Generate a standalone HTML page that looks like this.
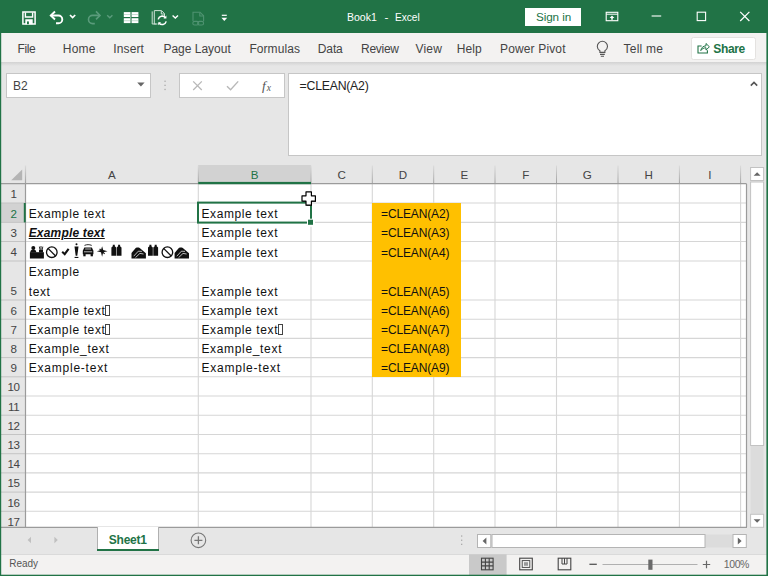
<!DOCTYPE html>
<html lang="en">
<head>
<meta charset="utf-8">
<title>Book1 - Excel</title>
<style>
html,body{margin:0;padding:0}
body{width:768px;height:576px;overflow:hidden;position:relative;background:#e6e6e6;font-family:"Liberation Sans",sans-serif;color:#262626}
.a{position:absolute}
.t{position:absolute;white-space:nowrap;line-height:1}
#title{left:0;top:0;width:768px;height:33px;background:#217346}
#ribbon{left:0;top:33px;width:768px;height:29px;background:#f3f2f1}
#rshadow{left:0;top:62px;width:768px;height:4px;background:linear-gradient(#d2d2d2,#e6e6e6)}
.tab{font-size:12px;color:#444;top:42.6px}
.tt{color:#fff;font-size:11.7px;top:11px}
#namebox{left:6px;top:73px;width:143px;height:23px;background:#fff;border:1px solid #c6c6c6}
#fxbtns{left:179px;top:73px;width:104px;height:23px;background:#fff;border:1px solid #c6c6c6}
#fbox{left:288px;top:73px;width:472px;height:81px;background:#fff;border:1px solid #c6c6c6}
#sheet{left:26px;top:184px;width:720px;height:343px;background:#fff}
.ch{position:absolute;top:165px;height:18px;line-height:20px;text-align:center;font-size:11.6px;color:#444}
.ch.sel{background:#d2d2d2;color:#217346}
.rh{position:absolute;left:1px;width:24px;text-align:center;font-size:11.6px;color:#444;letter-spacing:-0.4px}
.rh span{position:absolute;left:0.6px;width:24px;bottom:3.1px;line-height:1}
.rh.sel{background:#d2d2d2;color:#217346}
.c{position:absolute;white-space:nowrap;font-size:12px;line-height:1;color:#111}
.nb{display:inline-block;width:2.6px;height:8.6px;border:1px solid #444;margin-left:-0.3px;vertical-align:-1px}
.f{position:absolute;white-space:nowrap;font-size:12px;line-height:1;color:#111;left:381px;letter-spacing:-0.13px}
#tabs{left:1px;top:528px;width:766px;height:26px;background:#e6e6e6}
#status{left:1px;top:554px;width:766px;height:22px;background:#f3f2f1;border-top:1px solid #dadada;box-sizing:border-box}
#bl{left:0;top:33px;width:1px;height:543px;background:#217346}
#br{left:767px;top:33px;width:1px;height:543px;background:#217346}
#bb{left:0;top:575px;width:768px;height:1px;background:#217346}
</style>
</head>
<body>
<!-- title bar -->
<div class="a" id="title"></div>
<div class="t tt" style="left:347px;transform:scaleX(0.9);transform-origin:0 0">Book1</div>
<div class="t tt" style="left:384.5px">-</div>
<div class="t tt" style="left:394.7px;transform:scaleX(0.865);transform-origin:0 0">Excel</div>
<svg class="a" style="left:0;top:0" width="768" height="33" viewBox="0 0 768 33" fill="none" stroke="#fff" stroke-width="1.3">
<!-- save -->
<path d="M22.900 12h12.200v12h-12.200z" stroke-width="1.500"/>
<path d="M25.400 12.600v4.400h7.200v-4.400" stroke-width="1.400"/>
<path d="M25.300 19.300h7.400v4.900h-7.400z" fill="#fff" stroke="none"/>
<rect x="27" y="21.400" width="1.900" height="2.800" fill="#217346" stroke="none"/>
<!-- undo -->
<path d="M50.800 15.500h7.600a3.900 3.900 0 0 1 0 7.800h-2.400" stroke-width="1.900"/>
<path d="M55 11.500l-4.200 4 4.200 4" stroke-width="1.900"/>
<path d="M70 15l2.600 2.600 2.600-2.600" stroke-width="1.700"/>
<!-- redo (dim) -->
<g stroke="#5a9b7b">
<path d="M100 15.4h-7.4a4.1 4.1 0 0 0 0 8.2h2.2" stroke-width="1.6"/>
<path d="M96 11.4l4 4-4 4" stroke-width="1.6"/>
<path d="M107.2 15.2l2.6 2.6 2.6-2.6" stroke-width="1.4"/>
</g>
<!-- table icon -->
<g stroke="none" fill="#fff">
<rect x="123.8" y="12.1" width="6.2" height="4.9"/>
<rect x="131.6" y="12.1" width="6.8" height="4.9"/>
<rect x="123.8" y="18.2" width="6.2" height="4.9"/>
<rect x="131.6" y="18.2" width="6.8" height="4.9"/>
<rect x="130.4" y="12.1" width="0.7" height="11" fill="#cfe3d7"/>
</g>
<path d="M123.8 14.5h14.6M123.8 20.7h14.6" stroke="#8fbba3" stroke-width="0.5"/>
<!-- doc refresh -->
<g stroke="#cfe3d7" stroke-width="1">
<path d="M152.2 11.4v12.6h3.5"/>
<path d="M154.3 10.6h7.2l3 3v3.2M154.3 10.6v13.4h3.2"/>
<path d="M161.3 10.8v3.2h3"/>
</g>
<g stroke="#fff" stroke-width="1.5">
<path d="M158.2 19.3a4.1 4.1 0 0 1 7.2-1.6"/>
<path d="M166.2 21.4a4.1 4.1 0 0 1-7.2 1.6"/>
</g>
<path d="M166.4 15.6v2.9h-2.9zM158.2 25.2v-2.9h2.9z" fill="#fff" stroke="none"/>
<path d="M172.6 15.4l2.7 2.7 2.7-2.7" stroke-width="1.4"/>
<!-- dim doc link -->
<g stroke="#4f9371" stroke-width="1.1">
<path d="M193 21v-8.8h7l3.6 3.6v5.4"/>
<path d="M199.8 12.4v3.6h3.6"/>
<rect x="192.8" y="21.4" width="6" height="3.6" rx="1.8"/>
<rect x="197.6" y="21.4" width="6" height="3.6" rx="1.8"/>
</g>
<!-- qat customize -->
<path d="M221.8 15.3h5" stroke-width="1.2"/>
<path d="M221.4 17.8h5.8l-2.9 3.2z" fill="#fff" stroke="none"/>
<!-- ribbon display options -->
<rect x="606.2" y="12.3" width="11.6" height="8.4" stroke-width="1.1"/>
<path d="M606.2 14.2h11.6" stroke-width="1"/>
<path d="M612 15.6l-2.4 2.4h1.6v1.8h1.6v-1.8h1.6z" fill="#fff" stroke="none"/>
<!-- min / max / close -->
<path d="M651.6 16h9.6" stroke-width="1.1"/>
<rect x="697.2" y="12.2" width="8.4" height="8.4" stroke-width="1.1"/>
<path d="M740.2 11.8l9.2 9.2M749.4 11.8l-9.2 9.2" stroke-width="1.2"/>
</svg>
<div class="a" style="left:525px;top:8px;width:56px;height:18px;background:#fff"></div>
<div class="t" style="left:536px;top:11.4px;font-size:11.7px;color:#217346;letter-spacing:-0.1px">Sign in</div>

<!-- ribbon tabs -->
<div class="a" id="ribbon"></div>
<div class="a" id="rshadow"></div>
<div class="t tab" style="left:17.6px;letter-spacing:-0.45px">File</div>
<div class="t tab" style="left:62.7px;letter-spacing:0.28px">Home</div>
<div class="t tab" style="left:113.3px;letter-spacing:0.12px">Insert</div>
<div class="t tab" style="left:163.4px;letter-spacing:0.0px">Page Layout</div>
<div class="t tab" style="left:249.4px;letter-spacing:0.07px">Formulas</div>
<div class="t tab" style="left:317.8px;letter-spacing:-0.13px">Data</div>
<div class="t tab" style="left:361px;letter-spacing:-0.28px">Review</div>
<div class="t tab" style="left:415.4px;letter-spacing:0.23px">View</div>
<div class="t tab" style="left:456.8px;letter-spacing:0.1px">Help</div>
<div class="t tab" style="left:500px;letter-spacing:0.15px">Power Pivot</div>
<div class="t tab" style="left:623.5px;letter-spacing:0.23px">Tell me</div>
<div class="a" style="left:691px;top:37.4px;width:62.6px;height:20.4px;background:#fff;border-radius:2.5px;border:0.6px solid #e4e2e0"></div>
<div class="t" style="left:713.3px;top:42.6px;font-size:12px;color:#217346;font-weight:bold;letter-spacing:-0.35px">Share</div>

<svg class="a" style="left:0;top:33px" width="768" height="30" viewBox="0 33 768 30" fill="none">
<!-- lightbulb -->
<path d="M599.9 52.4v-1.6c-1.6-1.2-2.6-2.6-2.6-4.4a5.1 5.1 0 0 1 10.2 0c0 1.800-1 3.200-2.600 4.400v1.600z" stroke="#555" stroke-width="1.1"/>
<path d="M600 54.400h4.800M600.800 56.300h3.200" stroke="#555" stroke-width="1.1"/>
<!-- share icon -->
<path d="M701.600 46h-3.600v7h9.400v-2.800" stroke="#217346" stroke-width="1.100"/>
<path d="M700.800 50.600c.4-2.900 2.300-4.600 5.200-4.800v-2.300l3.400 3.300-3.400 3.300v-2.300c-2.300 0-4 .9-5.200 2.800z" stroke="#217346" stroke-width="1" stroke-linejoin="round"/>
</svg>
<!-- formula bar -->
<div class="a" id="namebox"></div>
<div class="t" style="left:13px;top:80px;font-size:12px;color:#444">B2</div>
<div class="a" id="fxbtns"></div>
<div class="a" id="fbox"></div>
<div class="t" style="left:299.6px;top:80px;font-size:12.3px;color:#222;letter-spacing:-0.25px">=CLEAN(A2)</div>

<svg class="a" style="left:0;top:66px" width="768" height="99" viewBox="0 66 768 99" fill="none">
<path d="M137.200 82.400h7.400l-3.700 4.100z" fill="#666"/>
<rect x="164.400" y="80.600" width="1.300" height="1.300" fill="#aaa"/><rect x="164.400" y="84.700" width="1.300" height="1.300" fill="#aaa"/><rect x="164.400" y="88.800" width="1.300" height="1.300" fill="#aaa"/>
<path d="M193.200 81.400l8.600 8.600M201.800 81.400l-8.600 8.600" stroke="#b8b8b8" stroke-width="1.300"/>
<path d="M227 86.200l3.600 3.600 7.600-8.400" stroke="#b8b8b8" stroke-width="1.400"/>
<path d="M750.800 85.600l3.200-3.200 3.200 3.200" stroke="#555" stroke-width="1.600"/>
</svg>
<div class="t" style="left:262px;top:79px;font-family:'Liberation Serif',serif;font-style:italic;font-size:13.5px;color:#555">f</div>
<div class="t" style="left:266.800px;top:83.500px;font-family:'Liberation Serif',serif;font-style:italic;font-size:9.500px;color:#555">x</div>
<!-- sheet -->
<div class="a" id="sheet"></div>
<div class="ch" style="left:25.5px;width:172.8px">A</div>
<div class="ch sel" style="left:198.3px;width:112.69999999999999px">B</div>
<div class="ch" style="left:311px;width:61.30000000000001px">C</div>
<div class="ch" style="left:372.3px;width:61.39999999999998px">D</div>
<div class="ch" style="left:433.7px;width:61.30000000000001px">E</div>
<div class="ch" style="left:495px;width:61.5px">F</div>
<div class="ch" style="left:556.5px;width:61.5px">G</div>
<div class="ch" style="left:618px;width:61.39999999999998px">H</div>
<div class="ch" style="left:679.4px;width:61.200000000000045px">I</div>
<div class="rh" style="top:183.7px;height:19.30000000000001px"><span>1</span></div>
<div class="rh sel" style="top:203px;height:19.400000000000006px"><span>2</span></div>
<div class="rh" style="top:222.4px;height:19.099999999999994px"><span>3</span></div>
<div class="rh" style="top:241.5px;height:19.5px"><span>4</span></div>
<div class="rh" style="top:261px;height:39px"><span>5</span></div>
<div class="rh" style="top:300px;height:19.19999999999999px"><span>6</span></div>
<div class="rh" style="top:319.2px;height:19.19999999999999px"><span>7</span></div>
<div class="rh" style="top:338.4px;height:19.200000000000045px"><span>8</span></div>
<div class="rh" style="top:357.6px;height:19.19999999999999px"><span>9</span></div>
<div class="rh" style="top:376.8px;height:19.19999999999999px"><span>10</span></div>
<div class="rh" style="top:396px;height:19.19999999999999px"><span>11</span></div>
<div class="rh" style="top:415.2px;height:19.30000000000001px"><span>12</span></div>
<div class="rh" style="top:434.5px;height:19.19999999999999px"><span>13</span></div>
<div class="rh" style="top:453.7px;height:19.19999999999999px"><span>14</span></div>
<div class="rh" style="top:472.9px;height:19.200000000000045px"><span>15</span></div>
<div class="rh" style="top:492.1px;height:19.19999999999999px"><span>16</span></div>
<div class="rh" style="top:511.3px;height:19.19999999999999px"><span>17</span></div>
<svg class="a" style="left:0;top:0" width="768" height="576" viewBox="0 0 768 576">
<defs><linearGradient id="hs" gradientUnits="userSpaceOnUse" x1="0" y1="165" x2="0" y2="183"><stop offset="0" stop-color="#dcdcdc"/><stop offset="1" stop-color="#a2a2a2"/></linearGradient></defs>
<rect x="197.8" y="165.500" width="1" height="18" fill="url(#hs)"/>
<rect x="310.5" y="165.500" width="1" height="18" fill="url(#hs)"/>
<rect x="371.8" y="165.500" width="1" height="18" fill="url(#hs)"/>
<rect x="433.2" y="165.500" width="1" height="18" fill="url(#hs)"/>
<rect x="494.5" y="165.500" width="1" height="18" fill="url(#hs)"/>
<rect x="556.0" y="165.500" width="1" height="18" fill="url(#hs)"/>
<rect x="617.5" y="165.500" width="1" height="18" fill="url(#hs)"/>
<rect x="678.9" y="165.500" width="1" height="18" fill="url(#hs)"/>
<rect x="740.1" y="165.500" width="1" height="18" fill="url(#hs)"/>
<line x1="198.3" y1="184" x2="198.3" y2="527.3" stroke="#d6d6d6" stroke-width="1.1"/>
<line x1="311" y1="184" x2="311" y2="527.3" stroke="#d6d6d6" stroke-width="1.1"/>
<line x1="372.3" y1="184" x2="372.3" y2="527.3" stroke="#d6d6d6" stroke-width="1.1"/>
<line x1="433.7" y1="184" x2="433.7" y2="527.3" stroke="#d6d6d6" stroke-width="1.1"/>
<line x1="495" y1="184" x2="495" y2="527.3" stroke="#d6d6d6" stroke-width="1.1"/>
<line x1="556.5" y1="184" x2="556.5" y2="527.3" stroke="#d6d6d6" stroke-width="1.1"/>
<line x1="618" y1="184" x2="618" y2="527.3" stroke="#d6d6d6" stroke-width="1.1"/>
<line x1="679.4" y1="184" x2="679.4" y2="527.3" stroke="#d6d6d6" stroke-width="1.1"/>
<line x1="740.6" y1="184" x2="740.6" y2="527.3" stroke="#d6d6d6" stroke-width="1.1"/>
<line x1="26" y1="203" x2="746.5" y2="203" stroke="#d6d6d6" stroke-width="1.1"/>
<line x1="1" y1="203" x2="25" y2="203" stroke="#c4c4c4" stroke-width="1"/>
<line x1="26" y1="222.4" x2="746.5" y2="222.4" stroke="#d6d6d6" stroke-width="1.1"/>
<line x1="1" y1="222.4" x2="25" y2="222.4" stroke="#c4c4c4" stroke-width="1"/>
<line x1="26" y1="241.5" x2="746.5" y2="241.5" stroke="#d6d6d6" stroke-width="1.1"/>
<line x1="1" y1="241.5" x2="25" y2="241.5" stroke="#c4c4c4" stroke-width="1"/>
<line x1="26" y1="261" x2="746.5" y2="261" stroke="#d6d6d6" stroke-width="1.1"/>
<line x1="1" y1="261" x2="25" y2="261" stroke="#c4c4c4" stroke-width="1"/>
<line x1="26" y1="300" x2="746.5" y2="300" stroke="#d6d6d6" stroke-width="1.1"/>
<line x1="1" y1="300" x2="25" y2="300" stroke="#c4c4c4" stroke-width="1"/>
<line x1="26" y1="319.2" x2="746.5" y2="319.2" stroke="#d6d6d6" stroke-width="1.1"/>
<line x1="1" y1="319.2" x2="25" y2="319.2" stroke="#c4c4c4" stroke-width="1"/>
<line x1="26" y1="338.4" x2="746.5" y2="338.4" stroke="#d6d6d6" stroke-width="1.1"/>
<line x1="1" y1="338.4" x2="25" y2="338.4" stroke="#c4c4c4" stroke-width="1"/>
<line x1="26" y1="357.6" x2="746.5" y2="357.6" stroke="#d6d6d6" stroke-width="1.1"/>
<line x1="1" y1="357.6" x2="25" y2="357.6" stroke="#c4c4c4" stroke-width="1"/>
<line x1="26" y1="376.8" x2="746.5" y2="376.8" stroke="#d6d6d6" stroke-width="1.1"/>
<line x1="1" y1="376.8" x2="25" y2="376.8" stroke="#c4c4c4" stroke-width="1"/>
<line x1="26" y1="396" x2="746.5" y2="396" stroke="#d6d6d6" stroke-width="1.1"/>
<line x1="1" y1="396" x2="25" y2="396" stroke="#c4c4c4" stroke-width="1"/>
<line x1="26" y1="415.2" x2="746.5" y2="415.2" stroke="#d6d6d6" stroke-width="1.1"/>
<line x1="1" y1="415.2" x2="25" y2="415.2" stroke="#c4c4c4" stroke-width="1"/>
<line x1="26" y1="434.5" x2="746.5" y2="434.5" stroke="#d6d6d6" stroke-width="1.1"/>
<line x1="1" y1="434.5" x2="25" y2="434.5" stroke="#c4c4c4" stroke-width="1"/>
<line x1="26" y1="453.7" x2="746.5" y2="453.7" stroke="#d6d6d6" stroke-width="1.1"/>
<line x1="1" y1="453.7" x2="25" y2="453.7" stroke="#c4c4c4" stroke-width="1"/>
<line x1="26" y1="472.9" x2="746.5" y2="472.9" stroke="#d6d6d6" stroke-width="1.1"/>
<line x1="1" y1="472.9" x2="25" y2="472.9" stroke="#c4c4c4" stroke-width="1"/>
<line x1="26" y1="492.1" x2="746.5" y2="492.1" stroke="#d6d6d6" stroke-width="1.1"/>
<line x1="1" y1="492.1" x2="25" y2="492.1" stroke="#c4c4c4" stroke-width="1"/>
<line x1="26" y1="511.3" x2="746.5" y2="511.3" stroke="#d6d6d6" stroke-width="1.1"/>
<line x1="1" y1="511.3" x2="25" y2="511.3" stroke="#c4c4c4" stroke-width="1"/>
<line x1="1" y1="183.7" x2="746.5" y2="183.7" stroke="#9b9b9b" stroke-width="1.2"/>
<line x1="25.5" y1="183" x2="25.5" y2="527.3" stroke="#9b9b9b" stroke-width="1.2"/>
<rect x="24.900" y="165.500" width="1.200" height="18" fill="url(#hs)"/>
<line x1="746.5" y1="183.7" x2="746.5" y2="527.3" stroke="#9b9b9b" stroke-width="1.2"/>
<line x1="1" y1="527.3" x2="747" y2="527.3" stroke="#9b9b9b" stroke-width="1.2"/>
<polygon points="11.200,180.300 22.200,180.300 22.200,169.400" fill="#b4b4b4"/>
<rect x="198.300" y="181.900" width="112.700" height="2.300" fill="#217346"/>
<rect x="23.800" y="203" width="1.900" height="19.400" fill="#217346"/>
</svg>

<!-- orange box -->
<div class="a" style="left:372px;top:203px;width:88.5px;height:174px;background:#ffc000"></div>

<!-- cell text -->
<div class="c" style="left:28.7px;top:207.9px;letter-spacing:0.62px">Example text</div>
<div class="c" style="left:28.7px;top:227.0px;letter-spacing:0.17px;font-weight:bold;font-style:italic;text-decoration:underline">Example text</div>
<div class="c" style="left:28.7px;top:266.3px;letter-spacing:0.62px">Example</div>
<div class="c" style="left:28.7px;top:285.5px;letter-spacing:0.62px">text</div>
<div class="c" style="left:28.7px;top:304.7px;letter-spacing:0.62px">Example text<span class="nb"></span></div>
<div class="c" style="left:28.7px;top:323.9px;letter-spacing:0.62px">Example text<span class="nb"></span></div>
<div class="c" style="left:28.7px;top:343.1px;letter-spacing:0.67px">Example_text</div>
<div class="c" style="left:28.7px;top:362.3px;letter-spacing:0.78px">Example-text</div>
<div class="c" style="left:201.4px;top:207.9px;letter-spacing:0.62px">Example text</div>
<div class="c" style="left:201.4px;top:227.0px;letter-spacing:0.62px">Example text</div>
<div class="c" style="left:201.4px;top:246.5px;letter-spacing:0.62px">Example text</div>
<div class="c" style="left:201.4px;top:285.5px;letter-spacing:0.62px">Example text</div>
<div class="c" style="left:201.4px;top:304.7px;letter-spacing:0.62px">Example text</div>
<div class="c" style="left:201.4px;top:323.9px;letter-spacing:0.62px">Example text<span class="nb"></span></div>
<div class="c" style="left:201.4px;top:343.1px;letter-spacing:0.67px">Example_text</div>
<div class="c" style="left:201.4px;top:362.3px;letter-spacing:0.78px">Example-text</div>
<div class="f" style="top:207.9px">=CLEAN(A2)</div>
<div class="f" style="top:227.0px">=CLEAN(A3)</div>
<div class="f" style="top:246.5px">=CLEAN(A4)</div>
<div class="f" style="top:285.5px">=CLEAN(A5)</div>
<div class="f" style="top:304.7px">=CLEAN(A6)</div>
<div class="f" style="top:323.9px">=CLEAN(A7)</div>
<div class="f" style="top:343.1px">=CLEAN(A8)</div>
<div class="f" style="top:362.3px">=CLEAN(A9)</div>

<!-- row 4 symbol-font glyphs -->
<svg class="a" style="left:26px;top:242px" width="172" height="19" viewBox="26 242 172 19" fill="#111">
<rect x="29.900" y="252.200" width="14" height="6.300"/>
<circle cx="33.300" cy="248.100" r="2"/><path d="M30.300 252.600c0-2.200 1.200-3 3-3s3 .8 3 3z"/>
<path d="M39.400 246.600l1 5M41 246v5.600M42.800 246.600l-1 5" stroke="#111" stroke-width="0.900" fill="none"/>
<rect x="39" y="250" width="4" height="2.400"/>
<circle cx="51.8" cy="252.2" r="5.3" fill="none" stroke="#111" stroke-width="1.3"/><path d="M48.0 248.39999999999998l7.600 7.600" stroke="#111" stroke-width="1.300"/>
<path d="M62.200 251.800l2.500 2.400 3.900-5.400" stroke="#111" stroke-width="2.100" fill="none"/>
<circle cx="76.500" cy="244.200" r="1"/><path d="M74.500 246.400h4l-1.200 9.400h-1.600z"/><rect x="74.600" y="256.900" width="3.800" height="1.100"/>
<path d="M84.500 245.400c2.400-1 4.800-1 7.200 0" stroke="#111" stroke-width="0.900" fill="none"/>
<path d="M84.300 247.400h7.600l1.500 3.400v3.400h-10.600v-3.400z"/>
<path d="M85.200 249h5.800M84 251.800h8.200" stroke="#fff" stroke-width="0.700" fill="none"/>
<rect x="83.300" y="254" width="2.300" height="2.300"/><rect x="90.600" y="254" width="2.300" height="2.300"/>
<path d="M102.100 246.200l1.100 3.900 4.300 1.100-4.300 1.100-1.100 4.500-1.100-4.500-4.100-1.100 4.100-1.100z"/>
<path d="M99.600 248.800l5 5" stroke="#111" stroke-width="1.200"/>
<path d="M112.80000000000001 244.700h2v1.500l1.400 1.200v8.300h-4.800v-8.300l1.400-1.200z"/><path d="M118.10000000000001 244.700h2v1.500l1.400 1.200v8.300h-4.800v-8.300l1.400-1.200z"/>
<path d="M131.5 258.500v-5.600l4.200-5c1.400-.4 2.800-.4 4 0l6.200 5.400v5.200z"/><path d="M133.7 256.200l4.600-5 3.600 .200M135.5 257.600l4.400-4.200 3.600.600" stroke="#fff" stroke-width="0.700" fill="none"/>
<path d="M149.4 244.700h2v1.500l1.400 1.200v8.300h-4.800v-8.300l1.400-1.200z"/><path d="M154.70000000000002 244.700h2v1.500l1.400 1.200v8.300h-4.800v-8.300l1.400-1.200z"/>
<circle cx="167.4" cy="252.2" r="5.3" fill="none" stroke="#111" stroke-width="1.3"/><path d="M163.6 248.39999999999998l7.600 7.600" stroke="#111" stroke-width="1.300"/>
<path d="M174.6 258.500v-5.600l4.200-5c1.400-.4 2.800-.4 4 0l6.200 5.400v5.200z"/><path d="M176.79999999999998 256.200l4.600-5 3.600 .200M178.6 257.600l4.400-4.200 3.600.600" stroke="#fff" stroke-width="0.700" fill="none"/>
</svg>

<!-- selection -->
<svg class="a" style="left:190px;top:196px" width="130" height="34" viewBox="190 196 130 34">
<rect x="198" y="202.600" width="113" height="20" fill="none" stroke="#217346" stroke-width="2"/>
<rect x="307" y="218.700" width="8" height="8" fill="#fff"/>
<rect x="308" y="219.700" width="5" height="5.100" fill="#217346"/>
</svg>
<!-- mouse cursor -->
<svg class="a" style="left:298px;top:188px" width="22" height="20" viewBox="298 188 22 20">
<path d="M306 191.800h5.400v4h4v5.400h-4v4h-5.400v-4h-4v-5.400h4z" fill="#000" transform="translate(0.500 0.500)"/>
<path d="M306 191.800h5.400v4h4v5.400h-4v4h-5.400v-4h-4v-5.400h4z" fill="#fff" stroke="#000" stroke-width="1.200" stroke-linejoin="round"/>
</svg>
<!-- sheet tabs + status -->
<div class="a" id="tabs"></div>
<div class="a" style="left:97px;top:526.6px;width:60px;height:22.4px;background:#fff;border-left:1px solid #b0b0b0;border-right:1px solid #b0b0b0"></div>
<div class="a" style="left:97px;top:549px;width:62px;height:2px;background:#217346"></div>
<div class="t" style="left:108.8px;top:533.6px;font-size:12px;font-weight:bold;color:#217346;letter-spacing:-0.25px">Sheet1</div>
<div class="a" id="status"></div>
<div class="t" style="left:9.2px;top:559.2px;font-size:10px;color:#555">Ready</div>
<div class="t" style="left:723.8px;top:559.4px;font-size:10.5px;color:#666;letter-spacing:-0.4px">100%</div>

<svg class="a" style="left:0;top:160px" width="768" height="416" viewBox="0 160 768 416" fill="none">
<!-- vertical scrollbar -->
<rect x="750.600" y="182" width="13" height="332" fill="#dcdcdc"/>
<rect x="750.600" y="167.500" width="13" height="13" fill="#fff" stroke="#c2c2c2" stroke-width="1"/>
<path d="M753.600 175.800h7l-3.500-3.600z" fill="#666"/>
<rect x="750.600" y="182" width="13" height="263.500" fill="#fff" stroke="#c2c2c2" stroke-width="1"/>
<rect x="750.600" y="514.300" width="13" height="13" fill="#fff" stroke="#c2c2c2" stroke-width="1"/>
<path d="M753.600 519.200h7l-3.500 3.600z" fill="#666"/>
<!-- horizontal scrollbar -->
<rect x="461" y="535.400" width="1.300" height="1.300" fill="#aaa"/><rect x="461" y="539.600" width="1.300" height="1.300" fill="#aaa"/><rect x="461" y="543.700" width="1.300" height="1.300" fill="#aaa"/>
<rect x="491.500" y="534.500" width="241" height="13" fill="#dcdcdc"/>
<rect x="477.500" y="534.500" width="13.300" height="13" fill="#fff" stroke="#b4b4b4" stroke-width="1"/>
<path d="M486.400 537.400v7l-3.800-3.500z" fill="#666"/>
<rect x="492" y="534.500" width="213" height="13" fill="#fff" stroke="#b4b4b4" stroke-width="1"/>
<rect x="733" y="534.500" width="13.300" height="13" fill="#fff" stroke="#b4b4b4" stroke-width="1"/>
<path d="M737.800 537.400v7l3.800-3.500z" fill="#666"/>
<!-- sheet nav -->
<path d="M31 536.800v6.400l-3.400-3.200z" fill="#c0c0c0"/>
<path d="M54.400 536.800v6.400l3.400-3.200z" fill="#c0c0c0"/>
<circle cx="198.400" cy="540.300" r="7.300" stroke="#777" stroke-width="1.100"/>
<path d="M194.400 540.300h8M198.400 536.300v8" stroke="#777" stroke-width="1.300"/>
<!-- status bar icons -->
<rect x="469" y="554.300" width="37.600" height="21" fill="#c9c9c9"/>
<g stroke="#444" stroke-width="1.100">
<rect x="481.500" y="558.200" width="11.600" height="11.600"/>
<path d="M485.400 558.200v11.600M489.200 558.200v11.600M481.500 562.100h11.600M481.500 565.900h11.600"/>
<rect x="519.700" y="558.200" width="12.600" height="11.600"/>
<rect x="522.200" y="560.600" width="7.600" height="6.800" stroke-width="0.900"/>
<rect x="524" y="562.200" width="4" height="3.600" fill="#999" stroke="none"/>
<rect x="558.200" y="558.200" width="12.600" height="11.600"/>
<path d="M562 558.200v5.800h5v-5.800M564.500 558.200v5.800" stroke-width="1"/>
</g>
<path d="M589.400 564.300h7.400" stroke="#555" stroke-width="1.300"/>
<path d="M602.500 564.500h95" stroke="#b0b0b0" stroke-width="1"/>
<rect x="648.300" y="559.600" width="4.200" height="10.200" fill="#6a6a6a"/>
<path d="M702.800 564.500h7.400M706.500 560.800v7.400" stroke="#666" stroke-width="1.200"/>
</svg>
<!-- window borders -->
<svg class="a" style="left:0;top:0" width="768" height="576" viewBox="0 0 768 576">
<rect x="0" y="33" width="1.2" height="543" fill="#217346"/>
<rect x="766.4" y="33" width="1.6" height="543" fill="#217346"/>
<rect x="0" y="574.7" width="768" height="1.3" fill="#217346"/>
</svg>
</body>
</html>
